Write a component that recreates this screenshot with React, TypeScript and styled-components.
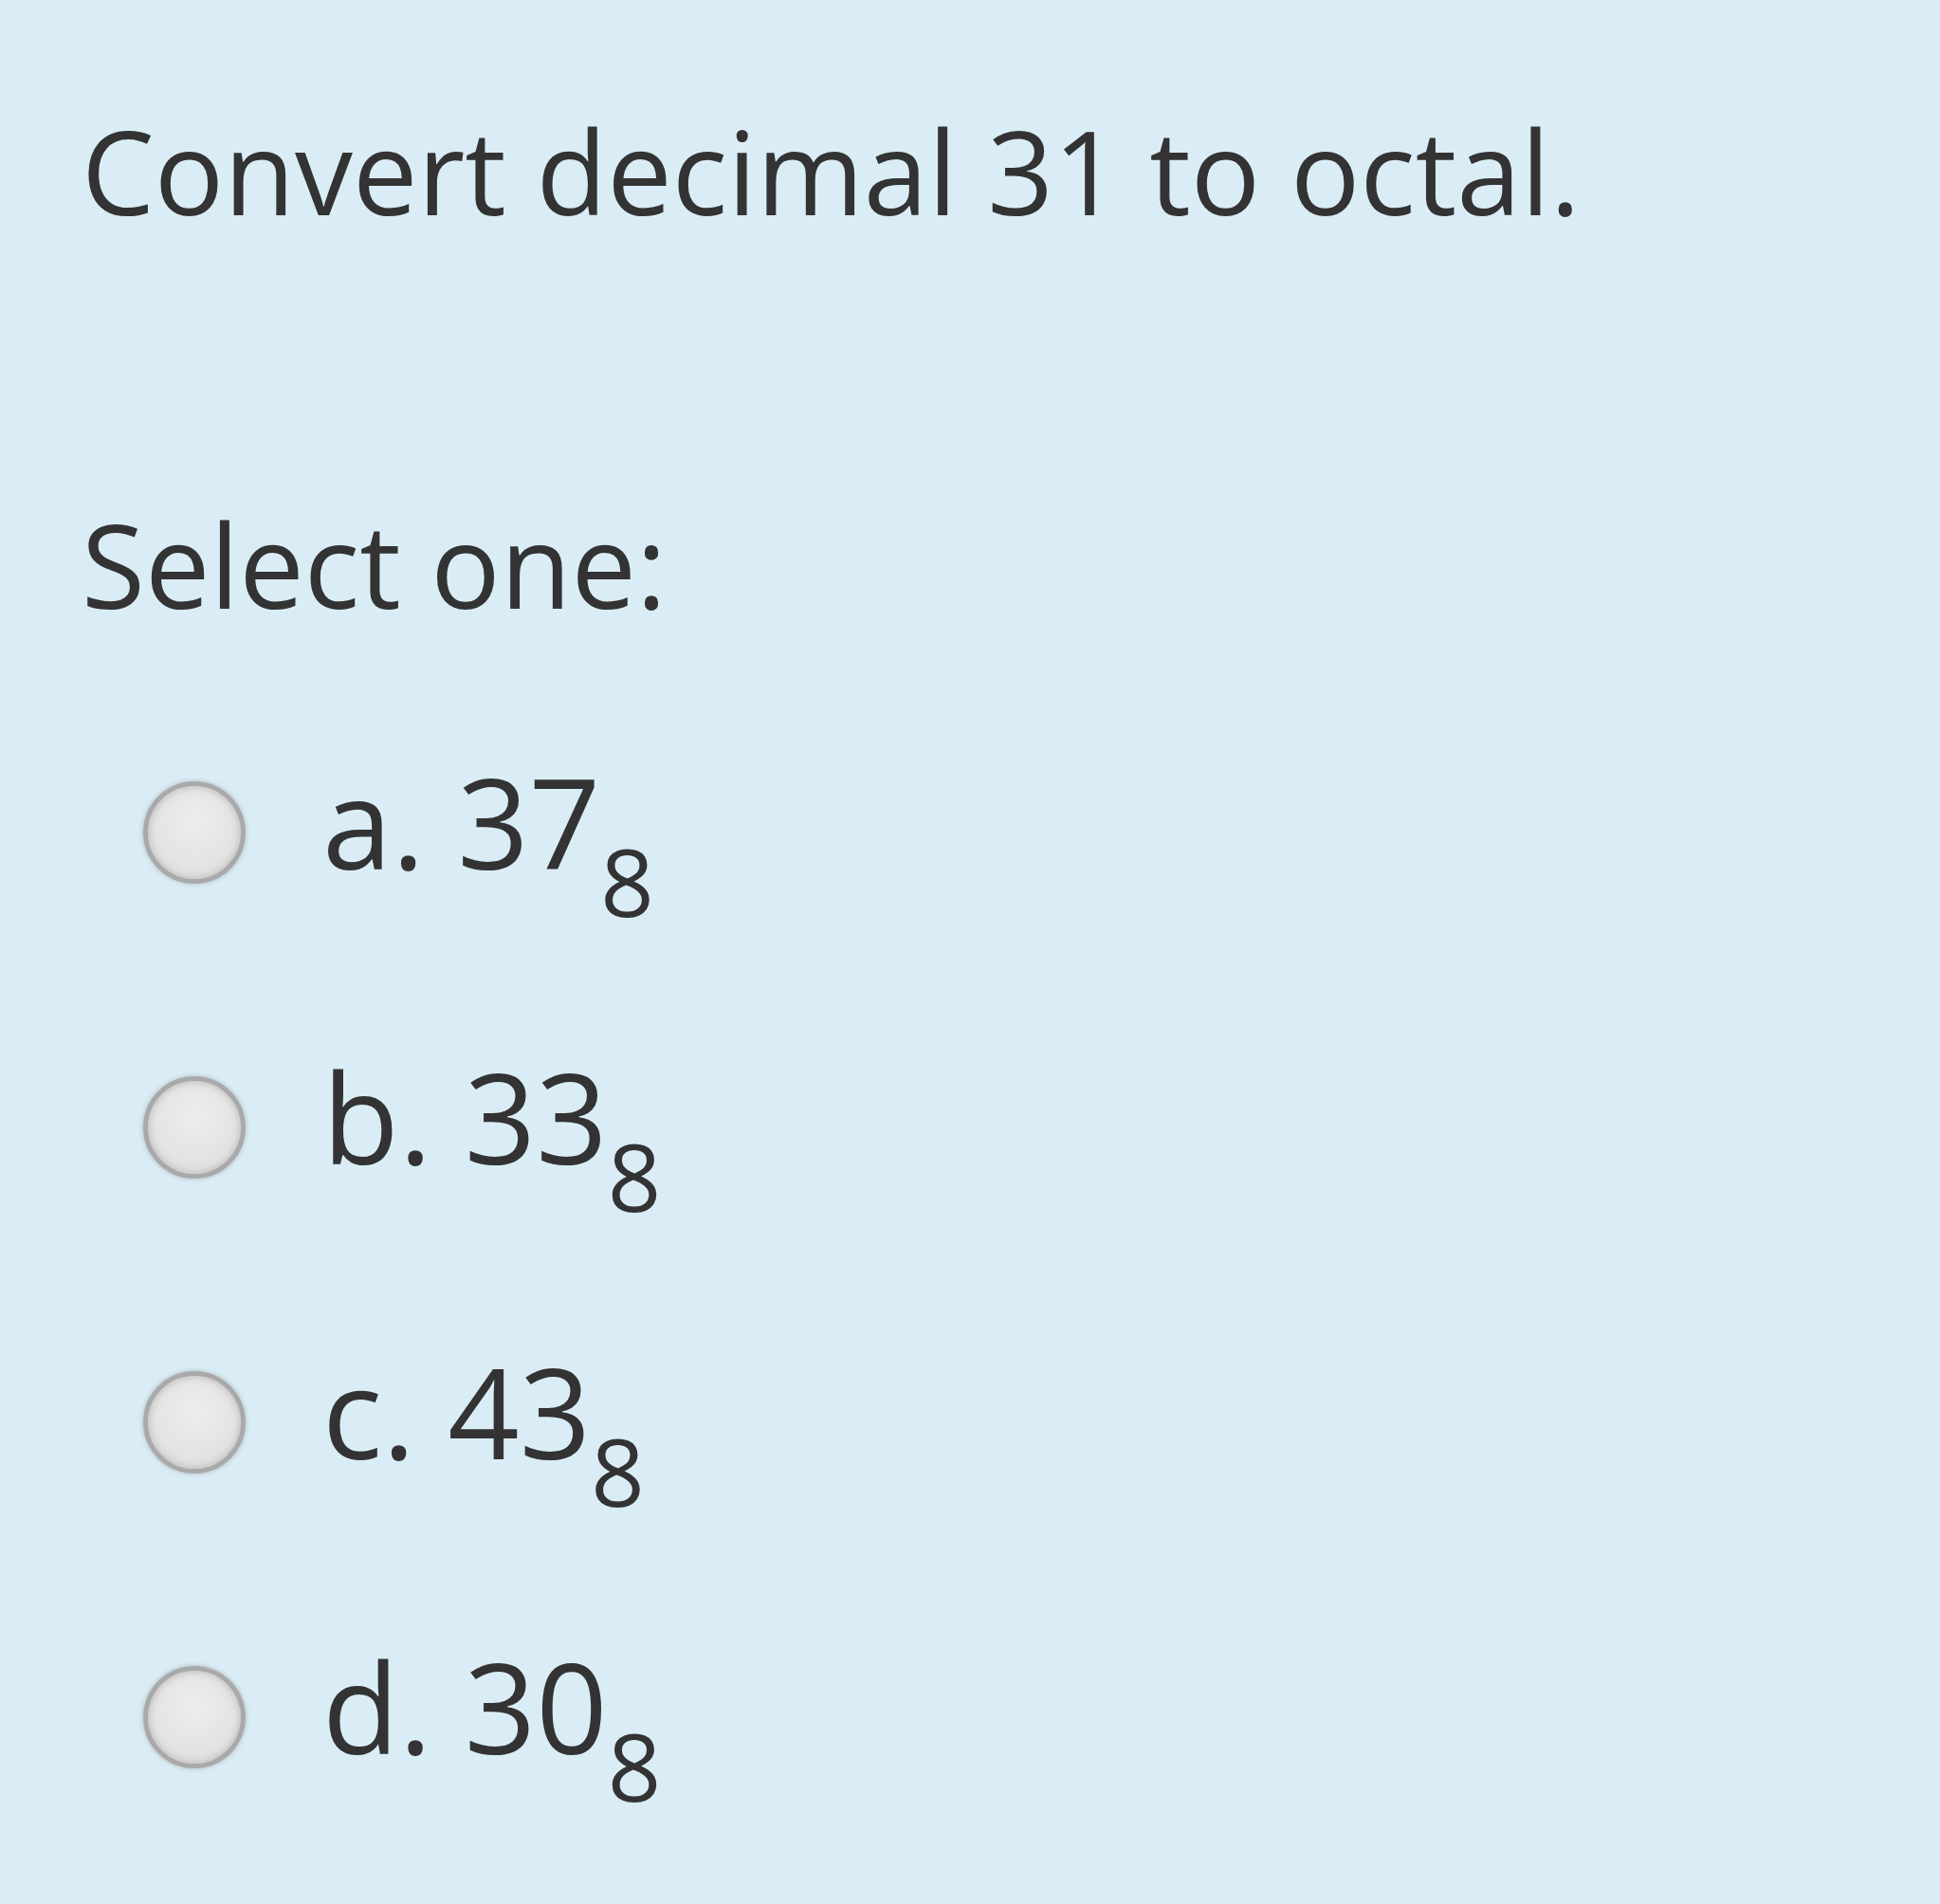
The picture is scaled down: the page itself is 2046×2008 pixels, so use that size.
import React from "react";
import styled, { createGlobalStyle } from "styled-components";

const Global = createGlobalStyle`
  html, body { margin: 0; padding: 0; background: #daedf7; }
  body { font-family: "Open Sans", "Noto Sans", sans-serif; color: #333333; }
`;

const Page = styled.div`
  min-height: 2008px;
  box-sizing: border-box;
  background: #daedf7;
  padding: 105px 0 0 86px;
`;

const Question = styled.div`
  font-size: 122px;
  line-height: 150px;
  margin: 0 0 265px 0;
`;

const Prompt = styled.div`
  font-size: 122px;
  line-height: 150px;
  margin: 0 0 116px 0;
`;

const AnswerList = styled.div`
  display: flex;
  flex-direction: column;
  gap: 151px;
`;

const OptionRow = styled.label`
  display: flex;
  align-items: flex-start;
  height: 160px;
`;

const Radio = styled.input.attrs({ type: "radio" })`
  appearance: none;
  -webkit-appearance: none;
  margin: 38px 81px 0 65px;
  width: 108px;
  height: 108px;
  flex: none;
  box-sizing: border-box;
  border-radius: 50%;
  border: 5px solid #a9a9a9;
  background: radial-gradient(circle at 50% 38%, #ededed 0%, #e4e4e4 55%, #dddddd 100%);
  box-shadow: 0 0 4px 1px rgba(150, 150, 150, 0.45),
    inset 0 0 6px 2px rgba(170, 170, 170, 0.55);
`;

const OptionText = styled.span`
  font-size: 132px;
  line-height: 160px;
  white-space: nowrap;
`;

const Sub = styled.sub`
  font-size: 75%;
  line-height: 0;
  vertical-align: -50px;
`;

const options = [
  { letter: "a", value: "37" },
  { letter: "b", value: "33" },
  { letter: "c", value: "43" },
  { letter: "d", value: "30" },
];

export default function App() {
  return (
    <>
      <Global />
      <Page>
        <Question>Convert decimal 31 to octal.</Question>
        <Prompt>Select one:</Prompt>
        <AnswerList>
          {options.map((o) => (
            <OptionRow key={o.letter}>
              <Radio name="answer" />
              <OptionText>
                {o.letter}. {o.value}
                <Sub>8</Sub>
              </OptionText>
            </OptionRow>
          ))}
        </AnswerList>
      </Page>
    </>
  );
}
